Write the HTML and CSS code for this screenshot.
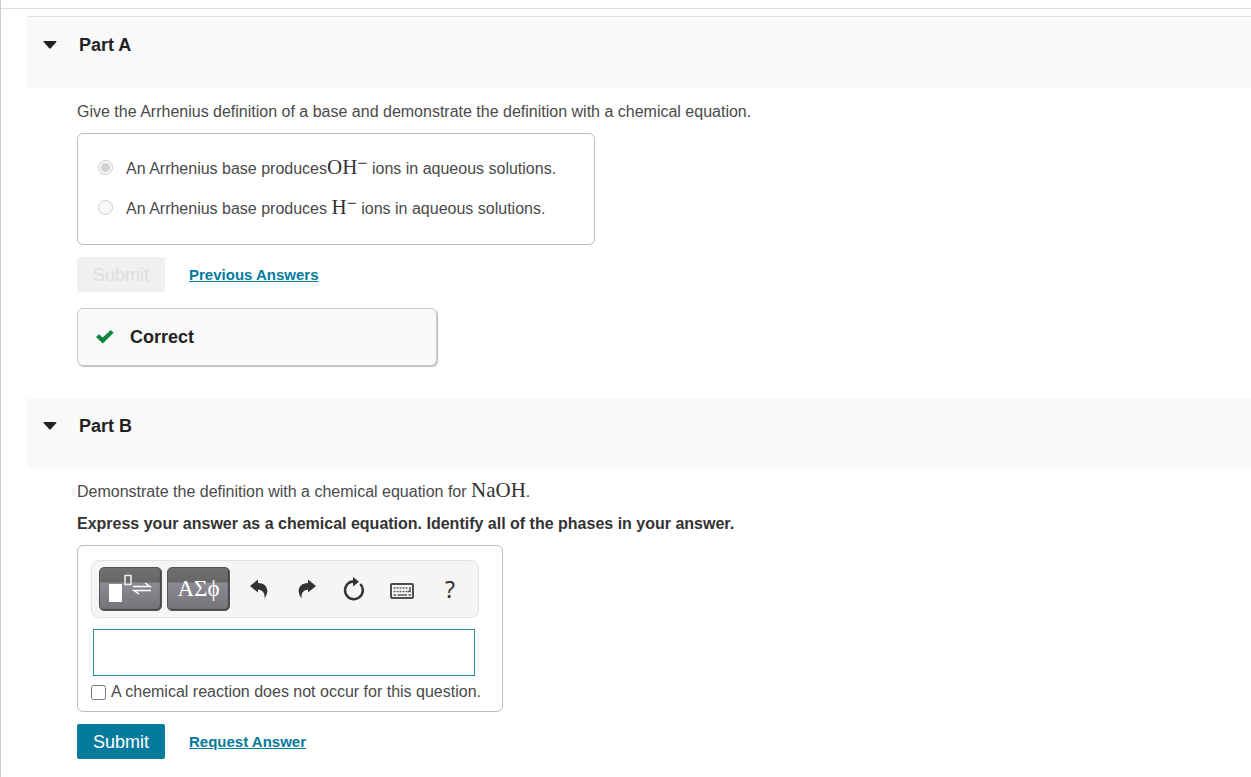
FILE: index.html
```html
<!DOCTYPE html>
<html lang="en">
<head>
<meta charset="utf-8">
<title>Arrhenius bases</title>
<link rel="stylesheet" href="styles.css">
</head>
<body>
<main class="page">
  <section class="part part-first">
    <header class="part-header">
      <button class="toggle" type="button" aria-label="Collapse Part A" aria-expanded="true"><svg width="14" height="8" viewBox="0 0 14 8"><path d="M1 0H13Q14 0 13.3 1L7.8 7.2Q7 8 6.2 7.2L.7 1Q0 0 1 0Z" fill="#222"/></svg></button>
      <h2 class="part-title">Part A</h2>
    </header>
    <div class="part-body">
      <p class="question">Give the Arrhenius definition of a base and demonstrate the definition with a chemical equation.</p>
      <form class="choices">
        <label class="choice"><input class="radio" type="radio" name="base" checked disabled><span>An Arrhenius base produces<span class="math">OH<sup class="charge">−</sup></span> ions in aqueous solutions.</span></label>
        <label class="choice"><input class="radio" type="radio" name="base" disabled><span>An Arrhenius base produces <span class="math">H<sup class="charge">−</sup></span> ions in aqueous solutions.</span></label>
      </form>
      <div class="actions">
        <button class="submit" type="button" disabled>Submit</button>
        <a class="link" href="#">Previous Answers</a>
      </div>
      <div class="feedback">
        <svg width="18" height="14" viewBox="0 0 18 14"><path d="M0 7L3 4.2L6.7 7.6L14.7 0L17.6 2.8L6.8 13.5Z" fill="#0a8640"/></svg>
        <span>Correct</span>
      </div>
    </div>
  </section>
  <section class="part">
    <header class="part-header">
      <button class="toggle" type="button" aria-label="Collapse Part B" aria-expanded="true"><svg width="14" height="8" viewBox="0 0 14 8"><path d="M1 0H13Q14 0 13.3 1L7.8 7.2Q7 8 6.2 7.2L.7 1Q0 0 1 0Z" fill="#222"/></svg></button>
      <h2 class="part-title">Part B</h2>
    </header>
    <div class="part-body">
      <p class="question">Demonstrate the definition with a chemical equation for <span class="math">NaOH</span>.</p>
      <p class="question instruction">Express your answer as a chemical equation. Identify all of the phases in your answer.</p>
      <form class="editor">
        <div class="toolbar">
          <button class="palette" type="button" aria-label="Templates"><svg width="61" height="42" viewBox="0 0 61 42"><path d="M9 16h13v18H9z" fill="#fff"/><path d="M25 7.500h6v9h-6z" fill="none" stroke="#eee" stroke-width="1.5"/><path d="M33 18.500H50L45 15M51 22.500H34L39 26" fill="none" stroke="#fff" stroke-width="1.5"/></svg></button>
          <button class="palette" type="button" aria-label="Greek letters">ΑΣϕ</button>
          <div class="tools">
            <button class="tool" type="button" aria-label="Undo"><svg width="18" height="20" viewBox="0 0 18 20"><path d="M0 7L8 .5V4C14 4 17.500 7.500 17.300 12.500Q17 16.500 14.500 19.500Q15.500 11.500 8 10.500V13.500Z" fill="#333"/></svg></button>
            <button class="tool" type="button" aria-label="Redo"><svg width="18" height="20" viewBox="0 0 18 20"><path d="M18 7L10 .5V4C4 4 .5 7.500 .7 12.500Q1 16.500 3.500 19.500Q2.500 11.500 10 10.500V13.500Z" fill="#333"/></svg></button>
            <button class="tool" type="button" aria-label="Reset"><svg width="22" height="24" viewBox="0 0 22 24"><path d="M7.300 5.100A8.900 8.900 0 1 0 17.300 7" fill="none" stroke="#333" stroke-width="2.500"/><path d="M10 0L16 4.700L10 9.400V6L6 6.500V3.800L10 3.200Z" fill="#333"/></svg></button>
            <button class="tool tool-keyboard" type="button" aria-label="Keyboard shortcuts"><svg width="24" height="16" viewBox="0 0 24 16"><rect x="1" y="1" width="22" height="14" rx="1" fill="#f7f7f7" stroke="#4d4d4d" stroke-width="2"/><path d="M3.500 5H18M3.500 8.500H17" stroke="#666" stroke-width="1.5" stroke-dasharray="2 1"/><path d="M20 4V8.500H17.500M3.500 12H6M7.500 12H17M18.500 12H21" fill="none" stroke="#555" stroke-width="1.5"/></svg></button>
            <button class="tool help" type="button" aria-label="Help">?</button>
          </div>
        </div>
        <input class="answer" type="text" aria-label="Chemical equation">
        <label class="no-reaction"><input class="checkbox" type="checkbox"><span>A chemical reaction does not occur for this question.</span></label>
      </form>
      <div class="actions">
        <button class="submit" type="button">Submit</button>
        <a class="link" href="#">Request Answer</a>
      </div>
    </div>
  </section>
</main>
</body>
</html>
```
FILE: styles.css
```css
* { box-sizing: border-box; }
body {
  margin: 0;
  background: #fff;
  color: #4a4a4a;
  font: 16px/20px "Liberation Sans", Arial, sans-serif;
}
button, input { font: inherit; margin: 0; }
svg { display: block; }
.page {
  min-height: 100vh;
  padding-top: 8px;
  border-left: 1px solid #ccc;
}
.part { padding-left: 26px; }
.part-first {
  padding-top: 7px;
  margin-bottom: 32px;
  border-top: 1px solid #ddd;
}
.part-header {
  display: flex;
  gap: 22px;
  min-height: 70px;
  padding: 18px 16px;
  background: #f9f9f9;
}
.part-first .part-header {
  min-height: 72px;
  border-top: 1px solid #e0e0e0;
}
.toggle {
  display: flex;
  align-items: center;
  height: 20px;
  padding: 0;
  border: 0;
  background: none;
}
.part-title {
  margin: 0;
  color: #222;
  font-size: 18px;
  line-height: 20px;
}
.part-body {
  display: flex;
  flex-direction: column;
  align-items: flex-start;
  padding: 13px 0 0 50px;
}
.question {
  margin: 0 0 10px;
  line-height: 22px;
}
.instruction { color: #333; font-weight: bold; }
.math {
  color: #333;
  font-family: "Liberation Serif", "Times New Roman", serif;
  font-size: 21px;
  line-height: 0;
}
.charge {
  font-size: 18px;
  line-height: 0;
  vertical-align: 5px;
}
.choices, .editor {
  border: 1px solid #bbb;
  border-radius: 6px;
}
.choices {
  display: grid;
  gap: 20px;
  padding: 25px 38px 25px 20px;
}
.choice { display: flex; gap: 13px; }
.radio { width: 15px; height: 15px; margin-top: 1px; }
.actions {
  display: flex;
  align-items: center;
  gap: 24px;
  margin-top: 12px;
}
.submit {
  height: 35px;
  padding: 0 16px;
  border: 0;
  border-radius: 2px;
  background: #047a9c;
  color: #fff;
  font-size: 18px;
}
.submit:disabled { background: #f0f0f0; color: #ddd; }
.link {
  color: #047a9c;
  font-size: 15px;
  font-weight: bold;
}
.feedback {
  display: flex;
  align-items: center;
  gap: 16px;
  width: 100%;
  max-width: 360px;
  margin-top: 16px;
  padding: 18px;
  border: 1px solid #ccc;
  border-radius: 6px;
  box-shadow: 1px 1px 1px #bbb;
  background: #f9f9f9;
  color: #222;
  font-size: 18px;
  font-weight: bold;
}
.editor {
  display: flex;
  flex-direction: column;
  padding: 14px 16px 9px 13px;
}
.toolbar {
  display: flex;
  gap: 5px;
  margin-right: 7px;
  padding: 6px 4px 6px 7px;
  border: 1px solid #e2e2e2;
  border-radius: 8px;
  background: #f5f5f5;
}
.palette {
  width: 63px;
  height: 44px;
  padding: 0;
  border: 1px solid #555;
  border-radius: 5px;
  box-shadow: inset -1px -1px 1px #444;
  background: linear-gradient(#707070, #666 34%, #8c8b94 35%, #747377);
  color: #fff;
  font: 23px/38px "Liberation Serif", "Times New Roman", serif;
}
.tools { display: flex; flex: 1; align-items: center; }
.tool {
  display: flex;
  flex: 1;
  align-items: center;
  justify-content: center;
  height: 44px;
  padding: 0;
  border: 0;
  background: none;
  color: #333;
}
.tool-keyboard { padding-top: 4px; }
.help { font: 23px/24px "Noto Sans", sans-serif; }
.answer {
  height: 47px;
  margin: 11px 11px 6px 2px;
  padding: 4px 8px;
  border: 1px solid #2b8aa6;
  border-radius: 0;
}
.no-reaction {
  display: flex;
  align-items: center;
  gap: 5px;
  padding-right: 5px;
}
.checkbox { width: 15px; height: 15px; }
```
